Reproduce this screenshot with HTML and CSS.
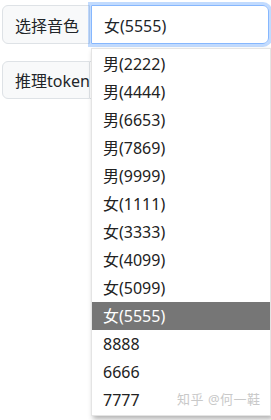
FILE: index.html
```html
<!DOCTYPE html>
<html lang="zh-CN">
<head>
    <meta charset="UTF-8">
    <meta name="viewport" content="width=device-width, initial-scale=1.0">
    <title>选择音色</title>
    <link rel="stylesheet" href="styles.css">
</head>
<body>
    <div class="grupo">
        <span class="rotulo">选择音色</span>
        <div class="seletor ativo">女(5555)</div>
    </div>
    <div class="grupo segundo">
        <span class="rotulo">推理token</span>
        <div class="seletor">
            <span class="seta"></span>
        </div>
    </div>

    <ul class="lista">
        <li>男(2222)</li>
        <li>男(4444)</li>
        <li>男(6653)</li>
        <li>男(7869)</li>
        <li>男(9999)</li>
        <li>女(1111)</li>
        <li>女(3333)</li>
        <li>女(4099)</li>
        <li>女(5099)</li>
        <li class="escolhido">女(5555)</li>
        <li>8888</li>
        <li>6666</li>
        <li>7777</li>
    </ul>

    <span class="marca">知乎 @何一鞋</span>
</body>
</html>
```

FILE: styles.css
```css
body {
    margin: 0;
    padding: 5px 2px 0 2px;
    background-color: #ffffff;
    font-family: "Noto Sans", "Noto Sans CJK SC", sans-serif;
    font-size: 16px;
    color: #212529;
    position: relative;
    height: 420px;
    box-sizing: border-box;
}

.grupo {
    display: flex;
    height: 39px;
}

.segundo {
    margin-top: 17px;
    height: 38px;
}

.rotulo {
    display: flex;
    align-items: center;
    padding: 0 12px;
    width: 88px;
    box-sizing: border-box;
    background-color: #f8f9fa;
    border: 1px solid #dee2e6;
    border-radius: 6px 0 0 6px;
    white-space: nowrap;
}

.seletor {
    flex: 1;
    display: flex;
    align-items: center;
    padding: 0 12px;
    border: 1px solid #dee2e6;
    border-left: 0;
    border-radius: 0 6px 6px 0;
    position: relative;
}

.ativo {
    border: 1px solid #86b7fe;
    box-shadow: 0 0 0 3px rgba(13, 110, 253, 0.25);
    margin-left: 1px;
    margin-right: 0;
}

.seta {
    position: absolute;
    right: -2px;
    top: 15px;
    width: 2px;
    height: 3px;
    background: #343a40;
}

.lista {
    position: absolute;
    top: 48px;
    left: 91px;
    width: 178px;
    margin: 0;
    padding: 1px 0;
    list-style: none;
    background: #ffffff;
    border: 1px solid #e4e4e4;
    box-shadow: 2px 3px 5px rgba(0, 0, 0, 0.3);
}

.lista li {
    height: 28px;
    line-height: 28px;
    padding-left: 11px;
    font-size: 16px;
    color: #222222;
}

.lista .escolhido {
    background-color: #767676;
    color: #ffffff;
}

.marca {
    position: absolute;
    left: 177px;
    top: 389px;
    font-size: 13px;
    color: #c9c9c9;
    letter-spacing: 0.5px;
}
```
